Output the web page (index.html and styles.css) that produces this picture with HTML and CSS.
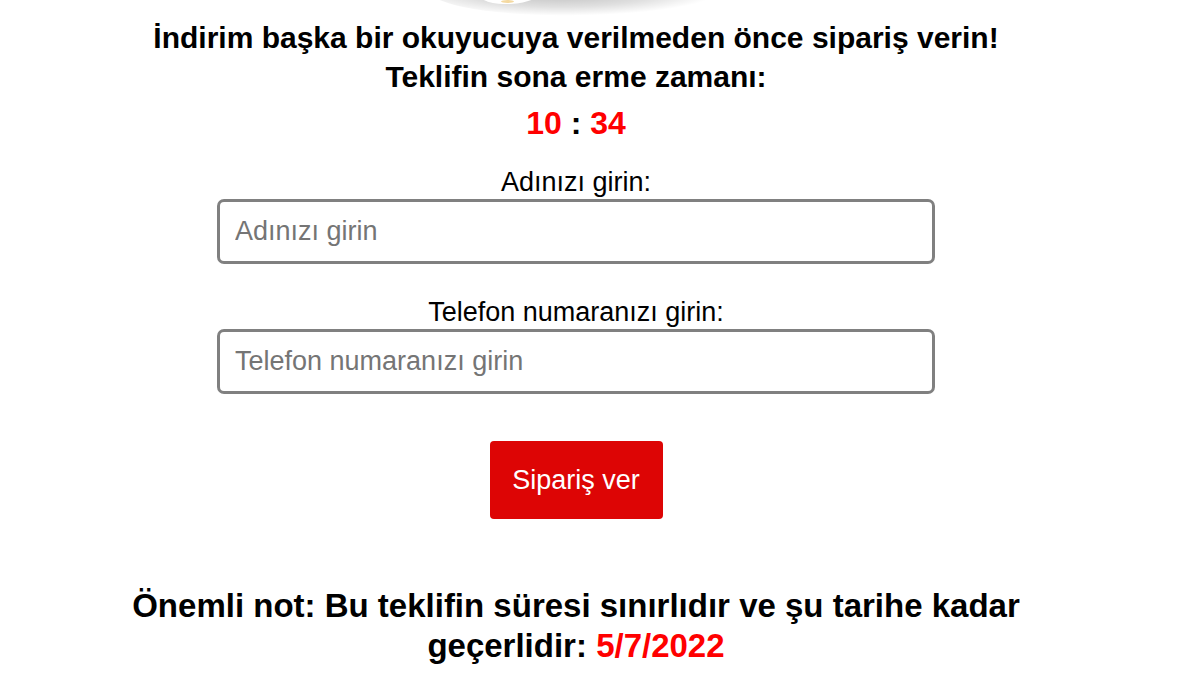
FILE: index.html
```html
<!DOCTYPE html>
<html lang="tr">
<head>
<meta charset="utf-8">
<link rel="stylesheet" href="styles.css">
</head>
<body>
<div class="page">
  <div class="product-edge">
    <div class="shadow"></div>
    <div class="box"></div>
    <div class="spot"></div>
  </div>
  <h2 class="headline">İndirim başka bir okuyucuya verilmeden önce sipariş verin!</h2>
  <h2 class="headline sub">Teklifin sona erme zamanı:</h2>
  <div class="timer"><span class="red">10</span> : <span class="red">34</span></div>
  <form class="form">
    <label class="label" for="name">Adınızı girin:</label>
    <input class="field" id="name" type="text" placeholder="Adınızı girin">
    <label class="label second" for="phone">Telefon numaranızı girin:</label>
    <input class="field" id="phone" type="tel" placeholder="Telefon numaranızı girin">
    <button class="btn" type="button">Sipariş ver</button>
  </form>
  <p class="note">Önemli not: Bu teklifin süresi sınırlıdır ve şu tarihe kadar geçerlidir: <span class="red">5/7/2022</span></p>
</div>
</body>
</html>
```
FILE: styles.css
```css
html, body {
  margin: 0;
  padding: 0;
  background: #fff;
}
body {
  font-family: "Liberation Sans", Arial, sans-serif;
  color: #000;
  overflow: hidden;
}
.page {
  width: 1152px;
  display: flex;
  flex-direction: column;
  align-items: center;
  text-align: center;
}
.product-edge {
  position: relative;
  width: 1152px;
  height: 18px;
}
.shadow {
  position: absolute;
  left: 430px;
  top: -34px;
  width: 290px;
  height: 50px;
  border-radius: 50%;
  background: radial-gradient(ellipse at 45% 50%, rgba(0,0,0,0.28) 0%, rgba(0,0,0,0.12) 45%, rgba(0,0,0,0) 70%);
}
.box {
  position: absolute;
  left: 478px;
  top: -20px;
  width: 64px;
  height: 24px;
  border-radius: 0 0 50% 50%;
  background: #fff;
  transform: rotate(-3deg);
}
.spot {
  position: absolute;
  left: 501px;
  top: 0;
  width: 13px;
  height: 3px;
  border-radius: 50%;
  background: #f4d9a0;
}
.headline {
  margin: 0;
  font-size: 30px;
  font-weight: bold;
  line-height: 40px;
}
.sub {
  line-height: 38px;
}
.timer {
  font-size: 32px;
  font-weight: bold;
  line-height: 54px;
}
.red {
  color: #ff0000;
}
.form {
  display: flex;
  flex-direction: column;
  align-items: center;
  margin-top: 16px;
}
.label {
  font-size: 27px;
  line-height: 32px;
  margin-bottom: 1px;
}
.label.second {
  margin-top: 32px;
}
.field {
  box-sizing: border-box;
  width: 718px;
  height: 65px;
  border: 3px solid #808080;
  border-radius: 7px;
  padding: 0 15px;
  font-family: "Liberation Sans", Arial, sans-serif;
  font-size: 27px;
  color: #000;
  margin: 0;
  outline: none;
  background: #fff;
}
.field::placeholder {
  color: #757575;
}
.btn {
  margin-top: 47px;
  width: 173px;
  height: 78px;
  border: none;
  border-radius: 4px;
  background: #dd0505;
  color: #fff;
  font-family: "Liberation Sans", Arial, sans-serif;
  font-size: 27px;
  padding: 0;
}
.note {
  width: 960px;
  margin: 67px 0 0;
  font-size: 33px;
  font-weight: bold;
  line-height: 40px;
}
```
